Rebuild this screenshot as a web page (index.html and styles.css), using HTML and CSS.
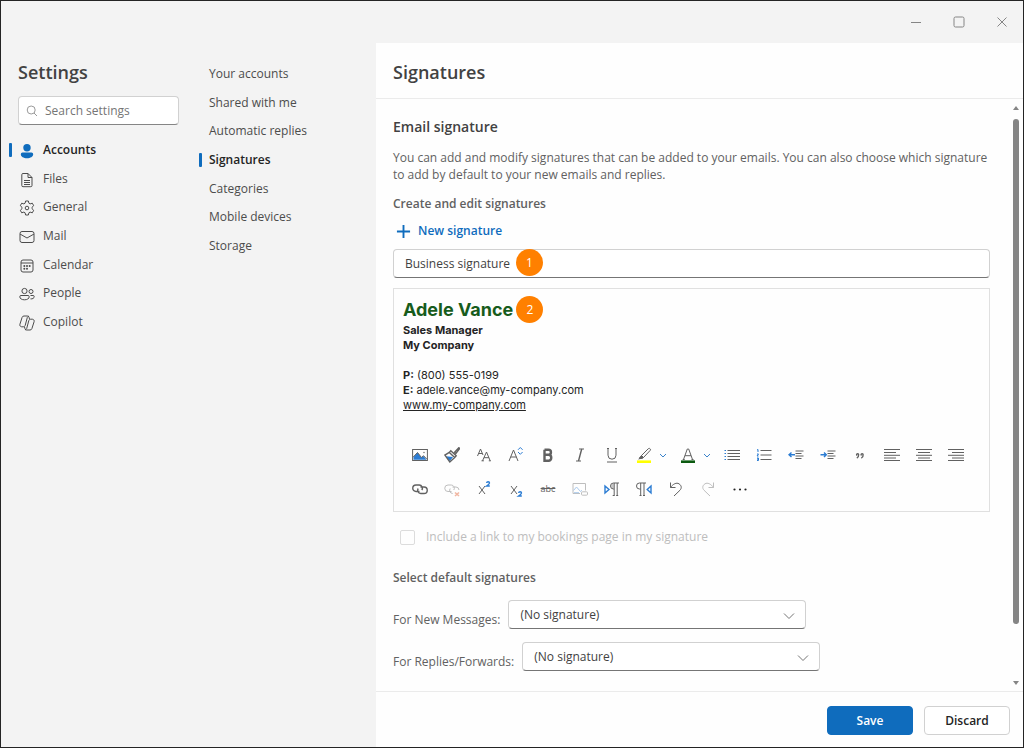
FILE: index.html
```html
<!DOCTYPE html>
<html lang="en">
<head>
<meta charset="utf-8">
<title>Settings - Signatures</title>
<link rel="stylesheet" href="styles.css">
</head>
<body>
<div class="window">
  <header class="titlebar">
    <button class="win-btn" aria-label="Minimize"><svg viewBox="0 0 12 12"><path d="M1 6.500h10"/></svg></button>
    <button class="win-btn" aria-label="Maximize"><svg viewBox="0 0 12 12"><rect x="1" y="1" width="10" height="10" rx="1.500"/></svg></button>
    <button class="win-btn" aria-label="Close"><svg viewBox="0 0 12 12"><path d="M1.500 1.500l9 9M10.500 1.500l-9 9"/></svg></button>
  </header>
  <div class="body">
    <aside class="sidebar">
      <h1 class="title">Settings</h1>
      <label class="search">
        <svg class="search-icon" viewBox="0 0 12 12"><circle cx="5.200" cy="5" r="4"/><path d="M8 8l3 3"/></svg>
        <input type="search" placeholder="Search settings" aria-label="Search settings">
      </label>
      <nav class="nav" aria-label="Settings">
        <a class="nav-item active" href="#"><svg viewBox="0 0 16 16"><g class="solid"><circle cx="8" cy="4.700" r="3.700"/><path d="M3.500 9.500h9a1.700 1.700 0 0 1 1.700 1.700c0 2.400-2.800 4-6.200 4s-6.200-1.600-6.200-4a1.700 1.700 0 0 1 1.700-1.700z"/></g></svg>Accounts</a>
        <a class="nav-item" href="#"><svg viewBox="0 0 16 16"><path d="M4 1.500h5l4 4v8a1.200 1.200 0 0 1-1.200 1.200H4a1.200 1.200 0 0 1-1.200-1.200V2.700A1.200 1.200 0 0 1 4 1.500zM9 1.500v4h4M5 8.500h6M5 10.500h6M5 12.500h6"/></svg>Files</a>
        <a class="nav-item" href="#"><svg viewBox="0 0 16 16"><path d="M6.600 1h2.800l.5 2.200 1.200.7 2.200-.7 1.400 2.500L13 7.300v1.400l1.700 1.600-1.400 2.500-2.200-.7-1.200.7-.5 2.200H6.600l-.5-2.200-1.200-.7-2.200.7-1.400-2.500L3 8.700V7.300L1.300 5.700l1.400-2.500 2.200.7 1.200-.7z"/><circle cx="8" cy="8" r="1.800"/></svg>General</a>
        <a class="nav-item" href="#"><svg viewBox="0 0 16 16"><rect x="1" y="2.500" width="14" height="11" rx="2"/><path d="M1 5l7 4 7-4"/></svg>Mail</a>
        <a class="nav-item" href="#"><svg viewBox="0 0 16 16"><rect x="2" y="2" width="12" height="12" rx="2"/><path d="M2 5h12"/><g class="solid"><circle cx="5.300" cy="8" r="1"/><circle cx="8" cy="8" r="1"/><circle cx="10.700" cy="8" r="1"/><circle cx="5.300" cy="10.800" r="1"/><circle cx="8" cy="10.800" r="1"/></g></svg>Calendar</a>
        <a class="nav-item" href="#"><svg viewBox="0 0 16 16"><circle cx="5.500" cy="5" r="2.600"/><circle cx="12" cy="5.500" r="2"/><path d="M2 9.500h7a1.200 1.200 0 0 1 1.200 1.200c0 2-2 3.100-4.700 3.100s-4.700-1.100-4.700-3.100A1.200 1.200 0 0 1 2 9.500zM11.500 9.500h2.600a1.100 1.100 0 0 1 1.100 1.100c0 1.600-1.600 2.500-3.700 2.300"/></svg>People</a>
        <a class="nav-item" href="#"><svg viewBox="0 0 16 16"><path d="M10.500 4L10 2.200A1.600 1.600 0 0 0 8.500 1H5a2 2 0 0 0-1.900 1.400L.9 9.300a1.900 1.900 0 0 0 1.800 2.500h1.600a2 2 0 0 0 1.900-1.400L8.300 2.500A2 2 0 0 1 10 1.200M5.500 12l.5 1.800A1.600 1.600 0 0 0 7.500 15H11a2 2 0 0 0 1.900-1.400l2.200-6.900a1.900 1.900 0 0 0-1.800-2.500h-1.600a2 2 0 0 0-1.900 1.400l-2.100 7.900A2 2 0 0 1 6 14.800"/></svg>Copilot</a>
      </nav>
    </aside>
    <nav class="subnav" aria-label="Accounts">
      <a class="nav-item" href="#">Your accounts</a>
      <a class="nav-item" href="#">Shared with me</a>
      <a class="nav-item" href="#">Automatic replies</a>
      <a class="nav-item active" href="#">Signatures</a>
      <a class="nav-item" href="#">Categories</a>
      <a class="nav-item" href="#">Mobile devices</a>
      <a class="nav-item" href="#">Storage</a>
    </nav>
    <main class="main">
      <header class="main-header"><h2 class="title">Signatures</h2></header>
      <div class="scroll-row">
        <div class="content">
          <h3 class="section-title">Email signature</h3>
          <p class="intro">You can add and modify signatures that can be added to your emails. You can also choose which signature to add by default to your new emails and replies.</p>
          <h4 class="subhead create">Create and edit signatures</h4>
          <button class="new-signature"><svg viewBox="0 0 16 16"><path d="M8 1v14M1 8h14"/></svg>New signature</button>
          <div class="name-field">
            <input class="name-input" type="text" value="Business signature" aria-label="Signature name">
            <span class="badge over-field">1</span>
          </div>
          <section class="editor">
            <div class="signature">
              <div class="sig-head"><strong class="sig-name">Adele Vance</strong><span class="badge">2</span></div>
              <p><b>Sales Manager</b></p>
              <p><b>My Company</b></p>
              <p><br></p>
              <p><b>P:</b> (800) 555-0199</p>
              <p><b>E:</b> adele.vance@my-company.com</p>
              <p><a class="sig-link" href="#">www.my-company.com</a></p>
            </div>
            <div class="toolbar" role="toolbar" aria-label="Formatting">
              <button class="tool" aria-label="Insert picture"><svg viewBox="0 0 16 16"><rect x=".6" y="2.500" width="14.800" height="11"/><path class="blue-fill" d="M1.500 12.700V10l4-4.500 4 5 2-1.500 3 3.700z"/><path d="M1 10.300L5.500 5.500l4 5 2-1.800 3.500 3.600"/><circle class="solid" cx="12" cy="5.500" r=".7"/></svg></button>
              <button class="tool" aria-label="Format painter"><svg viewBox="0 0 16 16"><path class="blue-fill" d="M2 9.200l7 .8-3.200 4.300z"/><path class="strong" d="M14.800.8l-4.200 4.400 1.300 1.300 3.500-4.700a.8.800 0 0 0-.6-1zM6.800 3.700l5.400 5-1.500 1.700-5.400-5zM5.300 5.400L.9 8.100l4.900 6.800 4.900-4.500"/></svg></button>
              <button class="tool" aria-label="Font"><svg viewBox="0 0 16 16"><path d="M1.500 9L4.500 2l2.500 6M2.500 6.500h3.800M6.500 13.800L10.500 5l3.700 8.800M8 10.700h5M5.500 13.800h2.400M12.800 13.800h2"/></svg></button>
              <button class="tool" aria-label="Font size"><svg viewBox="0 0 16 16"><path d="M1 14L5.500 3l4.500 11M2.700 10h5.700"/><path class="blue" d="M10 2.800L12.300.5l2.300 2.300M10 5l2.300 2.300L14.600 5"/></svg></button>
              <button class="tool" aria-label="Bold"><svg viewBox="0 0 16 16"><path class="heavy" d="M4.500 2.700v11h4.300a3 3 0 0 0 0-5.900H4.500M4.500 2.700h3.900a2.500 2.500 0 0 1 0 5.100"/></svg></button>
              <button class="tool" aria-label="Italic"><svg viewBox="0 0 16 16"><path d="M7 2h5M4 14h5"/><path class="strong" d="M9.700 2L6.500 14"/></svg></button>
              <button class="tool" aria-label="Underline"><svg viewBox="0 0 16 16"><path d="M4 1.500v6.700a4 4 0 0 0 8 0V1.500M3 15h10M3 1.500h2M11 1.500h2"/></svg></button>
              <button class="tool split" aria-label="Highlight"><svg viewBox="0 0 16 16"><path d="M5.500 8.500L12.300 1.700q1.300-.8 2 .3.500.8-.2 1.500L7.500 10.500zM5.500 8.500L3.500 11l2.500.5 1.500-1"/><path class="solid" d="M5.500 8.500l2 2-1.700 1.200L2 12.500z"/><path class="yellow" d="M1 14.700h14"/></svg><svg class="drop" viewBox="0 0 8 8"><path d="M1 3l3 3 3-3"/></svg></button>
              <button class="tool split" aria-label="Font color"><svg viewBox="0 0 16 16"><path d="M3.500 12.500L7.300 2h1.400l3.800 10.500M5 8.700h6M2.700 12.500h2M11.500 12.500h2"/><path class="green" d="M1 14.700h14"/></svg><svg class="drop" viewBox="0 0 8 8"><path d="M1 3l3 3 3-3"/></svg></button>
              <button class="tool" aria-label="Bullets"><svg viewBox="0 0 16 16"><path d="M3.500 3.500H16M3.500 6.500H16M3.500 9.500H16M3.500 12.500H16"/><path class="blue" d="M.5 3.500H2M.5 6.500H2M.5 9.500H2M.5 12.500H2"/></svg></button>
              <button class="tool" aria-label="Numbering"><svg viewBox="0 0 16 16"><path d="M4.500 3.500h11M4.500 8h11M4.500 12.500h11"/><path class="blue" d="M1 3l1-.5V5M1 7h1.500L1 9h1.500M1 11h1.500v1H1.200h1.300v1.500H1"/></svg></button>
              <button class="tool" aria-label="Decrease indent"><svg viewBox="0 0 16 16"><path d="M7.500 4h8M7.500 6.500h6M7.500 9h8M7.500 11.500h6"/><path class="blue strong" d="M1 7.800h6M3.500 5.500L1 7.800l2.500 2.300"/></svg></button>
              <button class="tool" aria-label="Increase indent"><svg viewBox="0 0 16 16"><path d="M7.500 4h8M7.500 6.500h6M7.500 9h8M7.500 11.500h6"/><path class="blue strong" d="M.5 7.800h5.800M4 5.500l2.300 2.300L4 10.100"/></svg></button>
              <button class="tool" aria-label="Quote"><svg viewBox="0 0 16 16"><path class="strong" d="M5 8.500a1 1 0 1 1 1.600-.8q.2 2.500-1.800 3.300M9.500 8.500a1 1 0 1 1 1.600-.8q.2 2.500-1.800 3.300"/></svg></button>
              <button class="tool" aria-label="Align left"><svg viewBox="0 0 16 16"><path d="M0 2.500h16M0 5.500h12M0 8.300h16M0 11h12M0 13.500h16"/></svg></button>
              <button class="tool" aria-label="Align center"><svg viewBox="0 0 16 16"><path d="M0 2.500h16M2 5.500h12M0 8.300h16M2 11h12M0 13.500h16"/></svg></button>
              <button class="tool" aria-label="Align right"><svg viewBox="0 0 16 16"><path d="M0 2.500h16M4 5.500h12M0 8.300h16M4 11h12M0 13.500h16"/></svg></button>
              <button class="tool" aria-label="Insert link"><svg viewBox="0 0 16 16"><path class="strong" d="M7.500 10.500H4A3.200 3.200 0 0 1 4 4h3.300a3.200 3.200 0 0 1 2.500 5M8.500 6H12a3.200 3.200 0 0 1 0 6.500H8.700a3.200 3.200 0 0 1-2.500-5"/></svg></button>
              <button class="tool" disabled aria-label="Remove link"><svg viewBox="0 0 16 16"><path d="M7.500 10.500H4A3.200 3.200 0 0 1 4 4h3.300a3.200 3.200 0 0 1 2.500 5M8.500 6H12a3.200 3.200 0 0 1 3 3M6.200 7.500a3.200 3.200 0 0 0 2.500 5"/><path class="orange" d="M11 11.500l4 3.500M15 11.500L11 15"/></svg></button>
              <button class="tool" aria-label="Superscript"><svg viewBox="0 0 16 16"><path d="M3 5l6 8M9 5l-6 8"/><path class="blue strong" d="M10.600 2q.2-1.200 1.500-1.200 1.400 0 1.400 1.200 0 1-2.900 3h3.200"/></svg></button>
              <button class="tool" aria-label="Subscript"><svg viewBox="0 0 16 16"><path d="M3 5l6 8M9 5l-6 8"/><path class="blue strong" d="M10.600 12q.2-1.200 1.500-1.200 1.400 0 1.400 1.200 0 1-2.900 3h3.200"/></svg></button>
              <button class="tool strike" aria-label="Strikethrough"><s>abc</s></button>
              <button class="tool" disabled aria-label="Picture alt text"><svg viewBox="0 0 16 16"><path d="M8 12.500H1V2.500h12.500v7"/><path class="blue" d="M1.500 9.500L4.500 6l4 4.500 1.500-1.200M2 11.700h5"/><rect x="9.500" y="10.800" width="6" height="3.400" rx="1"/></svg></button>
              <button class="tool" aria-label="Left-to-right"><svg viewBox="0 0 16 16"><path class="blue strong" d="M1 5l4 3.500L1 12z"/><path class="tint" d="M9.700 2.500v5a2.500 2.500 0 0 1 0-5z"/><path d="M15 2H9.500a3 3 0 0 0 0 6H10M10.200 2v12.500M13.200 2v12.500M8.700 14.500h2M12.200 14.500h2"/></svg></button>
              <button class="tool" aria-label="Right-to-left"><svg viewBox="0 0 16 16"><path class="blue strong" d="M15 5l-3.800 3.500L15 12z"/><path d="M10 2H3.500a3 3 0 0 0 0 6h1M4.700 2v12.500M8 2v12.500M3.500 14.500h2M7 14.500h2"/></svg></button>
              <button class="tool" aria-label="Undo"><svg viewBox="0 0 16 16"><path d="M2.500 1.500v5h5M2.500 6.500C5 3 8.500 1.200 11 2.800s3 4.200 1 6.400L6 15"/></svg></button>
              <button class="tool" disabled aria-label="Redo"><svg viewBox="0 0 16 16"><path d="M13.500 1.500v5h-5M13.500 6.500C11 3 7.500 1.200 5 2.800S2 7 4 9.200L10 15"/></svg></button>
              <button class="tool" aria-label="More"><svg viewBox="0 0 16 16"><g class="dots"><circle cx="2.500" cy="8.500" r="1.100"/><circle cx="8" cy="8.500" r="1.100"/><circle cx="13.500" cy="8.500" r="1.100"/></g></svg></button>
            </div>
          </section>
          <label class="bookings"><input type="checkbox" disabled>Include a link to my bookings page in my signature</label>
          <h4 class="subhead defaults">Select default signatures</h4>
          <div class="default-row">
            <label for="new-messages">For New Messages:</label>
            <span class="picker"><select id="new-messages"><option>(No signature)</option></select><svg viewBox="0 0 12 12"><path d="M1 3.500l5 5 5-5"/></svg></span>
          </div>
          <div class="default-row">
            <label for="replies">For Replies/Forwards:</label>
            <span class="picker"><select id="replies"><option>(No signature)</option></select><svg viewBox="0 0 12 12"><path d="M1 3.500l5 5 5-5"/></svg></span>
          </div>
        </div>
        <div class="scrollbar" aria-hidden="true">
          <svg viewBox="0 0 6 4"><path d="M0 4l3-4 3 4z"/></svg>
          <span class="thumb"></span>
          <svg viewBox="0 0 6 4"><path d="M0 0h6L3 4z"/></svg>
        </div>
      </div>
      <footer class="actions">
        <button class="action primary">Save</button>
        <button class="action">Discard</button>
      </footer>
    </main>
  </div>
</div>
</body>
</html>
```

FILE: styles.css
```css
* { box-sizing: border-box; }

body {
  margin: 0;
  color: #616161;
  font: 12px/18px "Open Sans", "Noto Sans", sans-serif;
}

h1, h2, h3, h4, p { margin: 0; }
button, input, select { font: inherit; color: inherit; }
button { padding: 0; border: 0; background: none; }
svg { fill: none; stroke: currentColor; flex: none; }
.solid { fill: currentColor; stroke: none; }

.window {
  display: flex;
  flex-direction: column;
  min-height: 100vh;
  border: 1px solid #242424;
  background: #f3f3f3;
}

.titlebar {
  display: flex;
  justify-content: flex-end;
  gap: 31px;
  height: 42px;
  padding-right: 15px;
}
.win-btn { display: flex; align-items: center; color: #858585; }
.win-btn svg { width: 12px; height: 12px; }

.body { display: flex; flex: 1; }
.sidebar { width: 196px; padding: 17px 18px 0 17px; }
.title {
  color: #424242;
  font-size: 18px;
  font-weight: 600;
  line-height: 24px;
}

.search {
  display: flex;
  align-items: center;
  gap: 7px;
  height: 29px;
  margin-top: 12px;
  padding: 0 7px;
  border: 1px solid #d1d1d1;
  border-bottom-color: #858585;
  border-radius: 4px;
  background: #fff;
}
.search-icon { width: 12px; height: 12px; color: #9a9a9a; }
.search input {
  width: 100%;
  min-width: 0;
  padding: 0;
  border: 0;
  outline: 0;
  background: none;
  appearance: none;
}
.search input::placeholder { color: #757575; }

.nav, .subnav {
  display: flex;
  flex-direction: column;
  justify-content: space-between;
}
.nav { height: 190px; margin-top: 16px; padding-left: 1px; }
.subnav { width: 179px; height: 212px; padding: 22px 0 0 12px; }
.nav-item {
  position: relative;
  display: flex;
  align-items: center;
  gap: 8px;
  color: #4c4c4c;
  line-height: 18px;
  text-decoration: none;
}
.nav-item svg { width: 16px; height: 16px; margin-top: 2px; }
.nav .active svg { color: #0f6cbd; }
.active { color: #242424; font-weight: 600; }
.active::before {
  content: "";
  position: absolute;
  top: 2px;
  left: -10px;
  width: 3px;
  height: 14px;
  border-radius: 1px;
  background: #0f6cbd;
}

.main {
  display: flex;
  flex: 1;
  flex-direction: column;
  min-width: 0;
  background: #fefefe;
}
.main-header { padding: 17px 17px 14px; border-bottom: 1px solid #ebebeb; }
.scroll-row { display: flex; flex: 1; }
.content { flex: 1; min-width: 0; padding: 18px 23px 20px 17px; }

.section-title { color: #424242; font-size: 14px; font-weight: 600; line-height: 20px; }
.intro { margin-top: 12px; line-height: 17px; }
.subhead { font-size: 12px; font-weight: 600; line-height: 18px; }
.create { margin-top: 12px; }

.new-signature {
  display: flex;
  align-items: center;
  gap: 7px;
  margin-top: 9px;
  padding-left: 3px;
  color: #0f6cbd;
  font-weight: 600;
}
.new-signature svg { width: 15px; height: 15px; stroke-width: 2; }

.name-field { position: relative; margin-top: 9px; }
.name-input {
  display: block;
  width: 100%;
  height: 29px;
  padding: 0 11px;
  border: 1px solid #d1d1d1;
  border-bottom-color: #757575;
  border-radius: 4px;
  background: #fff;
  color: #424242;
}
.badge {
  display: flex;
  align-items: center;
  justify-content: center;
  width: 27px;
  height: 27px;
  border-radius: 50%;
  background: #ff8000;
  color: #fff;
}
.over-field { position: absolute; top: 0; left: 123px; }

.editor { margin-top: 10px; padding: 7px 9px 5px; border: 1px solid #e0e0e0; }
.signature { color: #242424; font: 11px/15px Inter, "Liberation Sans", sans-serif; }
.sig-head { display: flex; align-items: center; gap: 3px; height: 27px; }
.sig-head .badge { font: 12px/18px "Open Sans", sans-serif; }
.sig-name { color: #175c1c; font-size: 18px; font-weight: 700; line-height: 24px; }
.sig-link { color: inherit; }

.toolbar { display: flex; flex-wrap: wrap; margin-top: 25px; padding-left: 1px; }
.tool {
  display: flex;
  align-items: center;
  justify-content: center;
  width: 32px;
  height: 34px;
  color: #616161;
}
.tool svg { width: 16px; height: 16px; }
.split { justify-content: flex-start; gap: 7px; width: 44px; padding-left: 8px; }
.tool .drop { width: 8px; height: 8px; color: #3a83cb; }
.tool:disabled { opacity: 0.4; }
.blue { stroke: #2b7cd3; }
.blue-fill { fill: #2b7cd3; stroke: none; }
.tint { fill: #c8c8c8; stroke: none; }
.strong { stroke-width: 1.4; }
.heavy { stroke-width: 2.4; }
.yellow { stroke: #ffff00; stroke-width: 2.6; }
.green { stroke: #0b5a10; stroke-width: 2.6; }
.orange { stroke: #e0501c; stroke-width: 1.6; }
.dots { fill: #242424; stroke: none; }
.strike { font-size: 9px; }

.bookings {
  display: flex;
  align-items: center;
  gap: 11px;
  margin-top: 16px;
  padding-left: 7px;
  color: #bdbdbd;
}
.bookings input {
  width: 15px;
  height: 15px;
  margin: 0;
  border: 1px solid #dcdcdc;
  border-radius: 2px;
  appearance: none;
}
.defaults { margin-top: 23px; }

.default-row { display: flex; align-items: flex-end; gap: 8px; margin-top: 13px; }
.picker { position: relative; width: 298px; }
.picker select {
  display: block;
  width: 100%;
  height: 29px;
  padding: 0 11px;
  border: 1px solid #d1d1d1;
  border-bottom-color: #757575;
  border-radius: 4px;
  background: #fff;
  color: #424242;
  appearance: none;
}
.picker svg {
  position: absolute;
  top: 10px;
  right: 11px;
  width: 12px;
  height: 12px;
  color: #757575;
  pointer-events: none;
}

.scrollbar {
  display: flex;
  flex-direction: column;
  align-items: center;
  gap: 9px;
  width: 10px;
  padding: 7px 4px 6px 0;
}
.scrollbar svg { width: 6px; height: 4px; fill: #858585; stroke: none; }
.thumb { width: 6px; height: 505px; border-radius: 3px; background: #858585; }
.scrollbar svg:last-child { margin-top: auto; }

.actions {
  display: flex;
  justify-content: flex-end;
  gap: 11px;
  padding: 14px 13px 12px;
  border-top: 1px solid #ebebeb;
}
.action {
  width: 86px;
  height: 29px;
  border: 1px solid #d1d1d1;
  border-radius: 4px;
  background: #fff;
  color: #242424;
  font-weight: 600;
}
.primary { border-color: #0f6cbd; background: #0f6cbd; color: #fff; }
```
